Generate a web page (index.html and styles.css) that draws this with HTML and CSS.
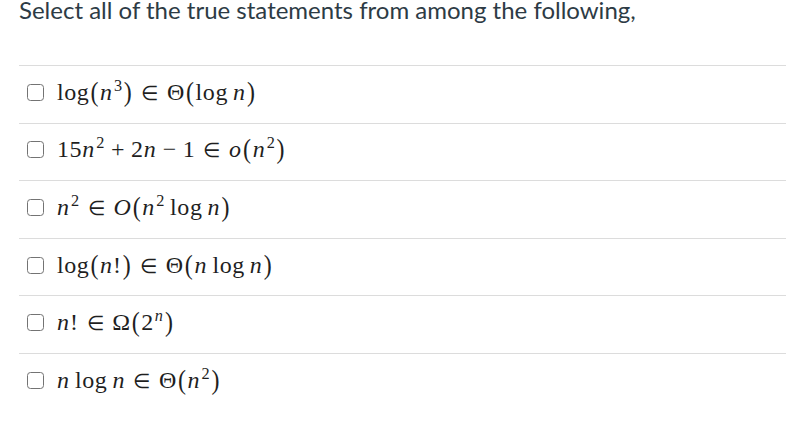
FILE: index.html
```html
<!DOCTYPE html>
<html>
<head>
<meta charset="utf-8">
<link rel="stylesheet" href="styles.css">
</head>
<body>
<div class="question">
  <div class="prompt">Select all of the true statements from among the following,</div>
  <div class="answers">
    <label class="answer"><span class="box"></span><span class="math">log<span class="p">(</span><i>n</i><sup>3</sup><span class="p">)</span><span class="rel">∈</span>Θ<span class="p">(</span>log<span class="th"></span><i>n</i><span class="p">)</span></span></label>
    <label class="answer"><span class="box"></span><span class="math">15<i>n</i><sup>2</sup><span class="bin">+</span>2<i>n</i><span class="bin">−</span>1<span class="rel">∈</span><i>o</i><span class="p">(</span><i>n</i><sup>2</sup><span class="p">)</span></span></label>
    <label class="answer"><span class="box"></span><span class="math"><i>n</i><sup>2</sup><span class="rel">∈</span><i>O</i><span class="p">(</span><i>n</i><sup>2</sup><span class="th"></span>log<span class="th"></span><i>n</i><span class="p">)</span></span></label>
    <label class="answer"><span class="box"></span><span class="math">log<span class="p">(</span><i>n</i>!<span class="p">)</span><span class="rel">∈</span>Θ<span class="p">(</span><i>n</i><span class="th"></span>log<span class="th"></span><i>n</i><span class="p">)</span></span></label>
    <label class="answer"><span class="box"></span><span class="math"><i>n</i>!<span class="rel">∈</span>Ω<span class="p">(</span>2<sup><i>n</i></sup><span class="p">)</span></span></label>
    <label class="answer"><span class="box"></span><span class="math"><i>n</i><span class="th"></span>log<span class="th"></span><i>n</i><span class="rel">∈</span>Θ<span class="p">(</span><i>n</i><sup>2</sup><span class="p">)</span></span></label>
  </div>
</div>
</body>
</html>
```
FILE: styles.css
```css
html, body {
  margin: 0;
  padding: 0;
  background: #fff;
}
.question {
  padding-left: 19px;
}
.prompt {
  font-family: Lato, "Open Sans", sans-serif;
  font-size: 24px;
  line-height: 24px;
  color: #2d3b45;
  margin-top: -2px;
  height: 43px;
  white-space: nowrap;
}
.answers {
  display: flex;
  flex-direction: column;
  margin-top: 24px;
}
.answer {
  display: flex;
  align-items: center;
  box-sizing: border-box;
  height: 57.6px;
  border-top: 1px solid #dcdcdc;
  padding-left: 8px;
  padding-bottom: 4px;
}
.box {
  box-sizing: border-box;
  width: 17px;
  height: 17px;
  border: 1.5px solid #737373;
  border-radius: 3.5px;
  flex: none;
  margin-right: 13px;
}
.math {
  font-family: "Liberation Serif", "Times New Roman", serif;
  font-size: 24px;
  color: #1f1f1f;
  white-space: nowrap;
  letter-spacing: 0.6px;
}
.math i {
  font-style: italic;
  letter-spacing: 1px;
}
.math sup {
  font-size: 0.68em;
  vertical-align: 0.55em;
  line-height: 0;
  margin-left: 1px;
}
.p {
  display: inline-block;
  transform: scaleY(1.15);
  margin: 0 1px;
}
.th {
  display: inline-block;
  width: 5px;
}
.rel {
  display: inline-block;
  font-size: 0.85em;
  margin: 0 8px;
}
.bin {
  display: inline-block;
  margin: 0 6px;
}
```
